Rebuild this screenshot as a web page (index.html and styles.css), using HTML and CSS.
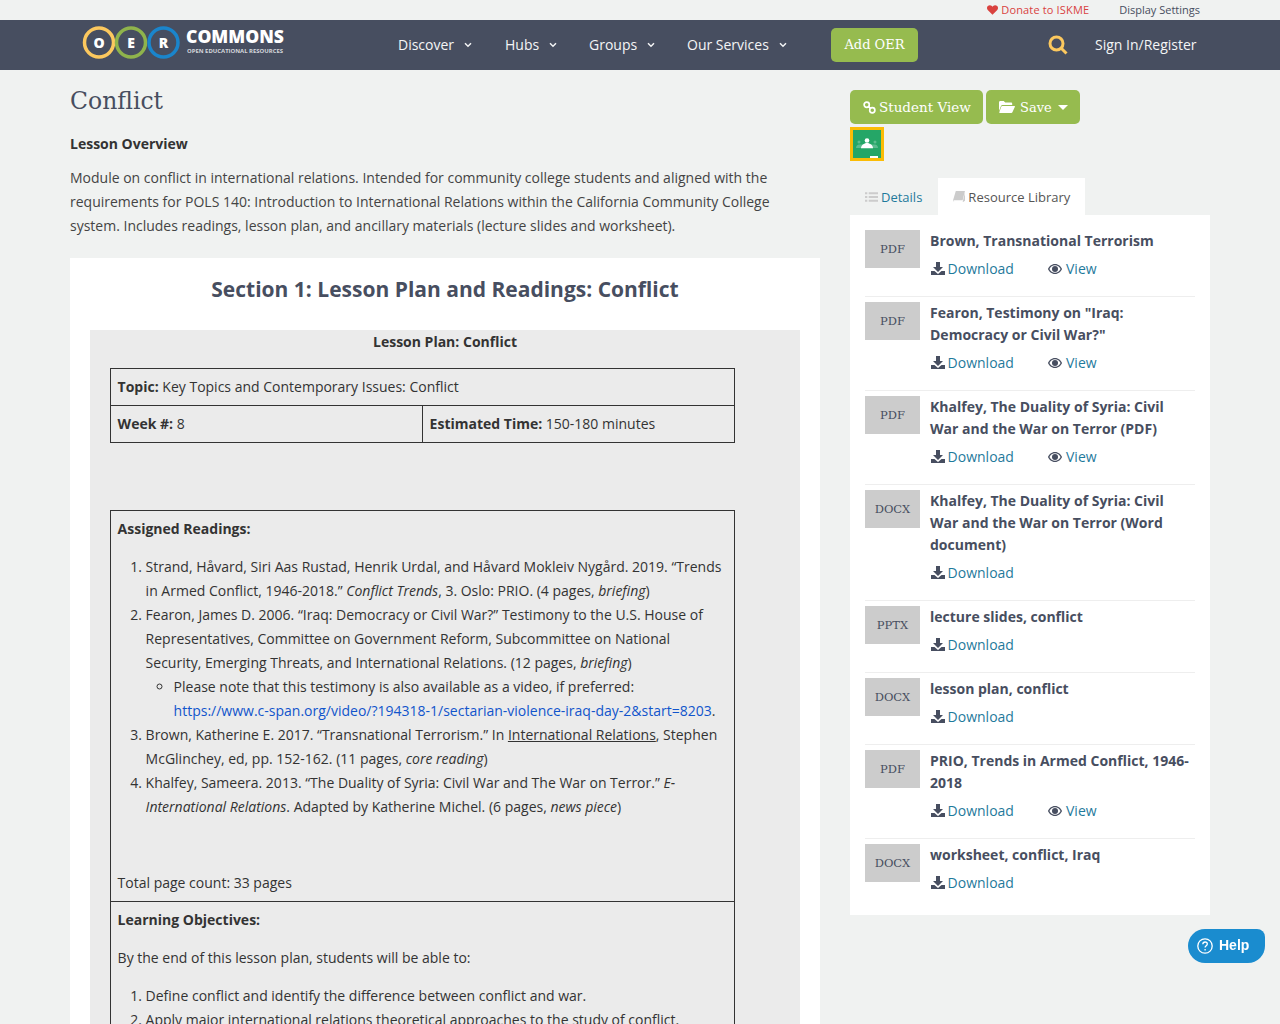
FILE: index.html
```html
<!DOCTYPE html>
<html lang="en">
<head>
<meta charset="utf-8">
<title>Conflict | OER Commons</title>
<link rel="stylesheet" href="styles.css">
</head>
<body>
<div class="topbar">
  <a class="donate"><svg class="heart" viewBox="0 0 16 14"><path d="M8 14 1.400 7.400C-.5 5.500-.4 2.700 1.200 1.200 2.900-.4 5.600-.3 7.100 1.300L8 2.200l.9-.9c1.500-1.600 4.200-1.700 5.900-.1 1.600 1.500 1.700 4.300-.2 6.200z"/></svg>Donate to ISKME</a>
  <a class="display">Display Settings</a>
</div>
<nav class="navbar">
  <svg class="logo" viewBox="0 0 210 36" width="210" height="36">
    <circle cx="19" cy="17.500" r="14.500" fill="#474e60" stroke="#fcc85e" stroke-width="3.500"/>
    <circle cx="51" cy="17.500" r="14.500" fill="#474e60" stroke="#8fb34c" stroke-width="3.500"/>
    <circle cx="83.500" cy="17.500" r="14.500" fill="#474e60" stroke="#1a85cc" stroke-width="3.500"/>
    <text class="logo-letter" x="19" y="22.500" text-anchor="middle">O</text>
    <text class="logo-letter" x="51" y="22.500" text-anchor="middle">E</text>
    <text class="logo-letter" x="83.500" y="22.500" text-anchor="middle">R</text>
    <text class="logo-name" x="106" y="18" textLength="98" lengthAdjust="spacingAndGlyphs">COMMONS</text>
    <text class="logo-sub" x="107" y="28" textLength="96" lengthAdjust="spacingAndGlyphs">OPEN EDUCATIONAL RESOURCES</text>
  </svg>
  <ul class="menu">
    <li class="menu-item discover">Discover<svg class="chev" viewBox="0 0 8 6"><path d="M1 1.200 4 4.200 7 1.200"/></svg></li>
    <li class="menu-item hubs">Hubs<svg class="chev" viewBox="0 0 8 6"><path d="M1 1.200 4 4.200 7 1.200"/></svg></li>
    <li class="menu-item groups">Groups<svg class="chev" viewBox="0 0 8 6"><path d="M1 1.200 4 4.200 7 1.200"/></svg></li>
    <li class="menu-item services">Our Services<svg class="chev" viewBox="0 0 8 6"><path d="M1 1.200 4 4.200 7 1.200"/></svg></li>
  </ul>
  <a class="add-oer">Add OER</a>
  <svg class="search" viewBox="0 0 20 20"><circle cx="8.500" cy="8.500" r="6.500"/><path d="M13.500 13.500 18.500 18.500"/></svg>
  <a class="signin">Sign In/Register</a>
</nav>
<div class="page">
  <main class="main">
    <h1 class="title">Conflict</h1>
    <p class="overview-label">Lesson Overview</p>
    <p class="overview">Module on conflict in international relations. Intended for community college students and aligned with the requirements for POLS 140: Introduction to International Relations within the California Community College system. Includes readings, lesson plan, and ancillary materials (lecture slides and worksheet).</p>
    <section class="card">
      <h2 class="section-title">Section 1: Lesson Plan and Readings: Conflict</h2>
      <div class="plan">
        <p class="plan-title">Lesson Plan: Conflict</p>
        <table class="grid-table">
          <tr><td colspan="2"><b>Topic:</b> Key Topics and Contemporary Issues: Conflict</td></tr>
          <tr><td class="half"><b>Week #:</b> 8</td><td><b>Estimated Time:</b> 150-180 minutes</td></tr>
        </table>
        <table class="grid-table second">
          <tr><td class="readings">
            <p class="cell-head"><b>Assigned Readings:</b></p>
            <ol class="list">
              <li>Strand, Håvard, Siri Aas Rustad, Henrik Urdal, and Håvard Mokleiv Nygård. 2019. “Trends in Armed Conflict, 1946-2018.” <i>Conflict Trends</i>, 3. Oslo: PRIO. (4 pages, <i>briefing</i>)</li>
              <li>Fearon, James D. 2006. “Iraq: Democracy or Civil War?” Testimony to the U.S. House of Representatives, Committee on Government Reform, Subcommittee on National Security, Emerging Threats, and International Relations. (12 pages, <i>briefing</i>)
                <ul class="sublist"><li>Please note that this testimony is also available as a video, if preferred: <a class="ext">https://www.c-span.org/video/?194318-1/sectarian-violence-iraq-day-2&amp;start=8203</a>.</li></ul>
              </li>
              <li>Brown, Katherine E. 2017. “Transnational Terrorism.” In <u>International Relations</u>, Stephen McGlinchey, ed, pp. 152-162. (11 pages, <i>core reading</i>)</li>
              <li>Khalfey, Sameera. 2013. “The Duality of Syria: Civil War and The War on Terror.” <i>E-International Relations</i>. Adapted by Katherine Michel. (6 pages, <i>news piece</i>)</li>
            </ol>
            <p class="total">Total page count: 33 pages</p>
          </td></tr>
          <tr><td class="objectives">
            <p class="cell-head"><b>Learning Objectives:</b></p>
            <p class="cell-head">By the end of this lesson plan, students will be able to:</p>
            <ol class="list">
              <li>Define conflict and identify the difference between conflict and war.</li>
              <li>Apply major international relations theoretical approaches to the study of conflict.</li>
            </ol>
          </td></tr>
        </table>
      </div>
    </section>
  </main>
  <aside class="side">
    <div class="actions">
      <a class="btn student"><svg class="btn-icon" viewBox="0 0 14 14"><circle cx="4" cy="4" r="2.800"/><circle cx="10" cy="10" r="2.800"/><path d="M5.800 5.800 8.200 8.200"/></svg>Student View</a>
      <a class="btn save"><svg class="folder" viewBox="0 0 16 12"><path d="M0 10V1.500C0 .7.500 0 1.300 0h3.400l1.500 1.500H12c.7 0 1.200.5 1.200 1.200V4H3.500C2.800 4 2.300 4.300 2 4.900z"/><path d="M3.200 5h12.300c.4 0 .6.400.4.800L13.400 11.300c-.2.400-.6.700-1 .7H.7c-.4 0-.6-.4-.4-.8L2.200 5.700C2.400 5.300 2.800 5 3.200 5z"/></svg><span class="save-text">Save</span><span class="caret"></span></a>
    </div>
    <svg class="classroom" viewBox="0 0 34 34" width="34" height="34">
      <rect x="1.500" y="1.500" width="31" height="31" fill="#25a667" stroke="#fbbc05" stroke-width="3"/>
      <circle cx="9" cy="15" r="1.500" fill="#5dbb8f"/><circle cx="25" cy="15" r="1.500" fill="#5dbb8f"/>
      <path d="M6 21c0-2 1.500-3.500 3-3.500h16c1.500 0 3 1.500 3 3.500z" fill="#5dbb8f"/>
      <circle cx="17" cy="13.500" r="2.300" fill="#fff"/>
      <path d="M11 21.300c0-3 3-5.300 6-5.300s6 2.300 6 5.300z" fill="#fff"/>
      <rect x="20" y="29" width="8" height="2" fill="#fff"/>
    </svg>
    <div class="tabs">
      <a class="tab details"><svg class="tab-icon" viewBox="0 0 14 12"><path d="M0 1h2.500v2H0zM4 1h10v2H4zM0 5h2.500v2H0zM4 5h10v2H4zM0 9h2.500v2H0zM4 9h10v2H4z"/></svg>Details</a>
      <a class="tab active"><svg class="tab-icon book" viewBox="0 0 13 12"><path d="M3 0h10L10.500 10H1.500C.6 10 .2 10.800.6 11.200.8 11.500 1.200 12 2 12h8.500L13 2v8.500L11 12H2C.8 12 0 11.200 0 10z"/></svg>Resource Library</a>
    </div>
    <div class="panel">
      <article class="res"><div class="thumb">PDF</div><div class="res-body"><h3 class="res-title">Brown, Transnational Terrorism</h3><div class="res-links"><a class="dl"><svg class="i-dl" viewBox="0 0 14 13"><path d="M5 0h4v5h3L7 10 2 5h3z"/><path d="M0 9h3.500L7 12l3.500-3H14v4H0z"/></svg>Download</a><a class="view"><svg class="i-eye" viewBox="0 0 14 10"><path d="M7 0C3.500 0 1 2.500 0 5c1 2.500 3.500 5 7 5s6-2.500 7-5c-1-2.500-3.500-5-7-5zm0 1.200c2.500 0 4.500 1.700 5.600 3.800C11.500 7.100 9.500 8.800 7 8.800S2.500 7.100 1.400 5C2.500 2.900 4.500 1.200 7 1.200z"/><circle cx="7" cy="5" r="3"/></svg>View</a></div></div></article>
      <article class="res"><div class="thumb">PDF</div><div class="res-body"><h3 class="res-title">Fearon, Testimony on "Iraq: Democracy or Civil War?"</h3><div class="res-links"><a class="dl"><svg class="i-dl" viewBox="0 0 14 13"><path d="M5 0h4v5h3L7 10 2 5h3z"/><path d="M0 9h3.500L7 12l3.500-3H14v4H0z"/></svg>Download</a><a class="view"><svg class="i-eye" viewBox="0 0 14 10"><path d="M7 0C3.500 0 1 2.500 0 5c1 2.500 3.500 5 7 5s6-2.500 7-5c-1-2.500-3.500-5-7-5zm0 1.200c2.500 0 4.500 1.700 5.600 3.800C11.500 7.100 9.500 8.800 7 8.800S2.500 7.100 1.400 5C2.500 2.900 4.500 1.200 7 1.200z"/><circle cx="7" cy="5" r="3"/></svg>View</a></div></div></article>
      <article class="res"><div class="thumb">PDF</div><div class="res-body"><h3 class="res-title">Khalfey, The Duality of Syria: Civil War and the War on Terror (PDF)</h3><div class="res-links"><a class="dl"><svg class="i-dl" viewBox="0 0 14 13"><path d="M5 0h4v5h3L7 10 2 5h3z"/><path d="M0 9h3.500L7 12l3.500-3H14v4H0z"/></svg>Download</a><a class="view"><svg class="i-eye" viewBox="0 0 14 10"><path d="M7 0C3.500 0 1 2.500 0 5c1 2.500 3.500 5 7 5s6-2.500 7-5c-1-2.500-3.500-5-7-5zm0 1.200c2.500 0 4.500 1.700 5.600 3.800C11.500 7.100 9.500 8.800 7 8.800S2.500 7.100 1.400 5C2.500 2.900 4.500 1.200 7 1.200z"/><circle cx="7" cy="5" r="3"/></svg>View</a></div></div></article>
      <article class="res"><div class="thumb">DOCX</div><div class="res-body"><h3 class="res-title">Khalfey, The Duality of Syria: Civil War and the War on Terror (Word document)</h3><div class="res-links"><a class="dl"><svg class="i-dl" viewBox="0 0 14 13"><path d="M5 0h4v5h3L7 10 2 5h3z"/><path d="M0 9h3.500L7 12l3.500-3H14v4H0z"/></svg>Download</a></div></div></article>
      <article class="res"><div class="thumb">PPTX</div><div class="res-body"><h3 class="res-title">lecture slides, conflict</h3><div class="res-links"><a class="dl"><svg class="i-dl" viewBox="0 0 14 13"><path d="M5 0h4v5h3L7 10 2 5h3z"/><path d="M0 9h3.500L7 12l3.500-3H14v4H0z"/></svg>Download</a></div></div></article>
      <article class="res"><div class="thumb">DOCX</div><div class="res-body"><h3 class="res-title">lesson plan, conflict</h3><div class="res-links"><a class="dl"><svg class="i-dl" viewBox="0 0 14 13"><path d="M5 0h4v5h3L7 10 2 5h3z"/><path d="M0 9h3.500L7 12l3.500-3H14v4H0z"/></svg>Download</a></div></div></article>
      <article class="res"><div class="thumb">PDF</div><div class="res-body"><h3 class="res-title">PRIO, Trends in Armed Conflict, 1946-2018</h3><div class="res-links"><a class="dl"><svg class="i-dl" viewBox="0 0 14 13"><path d="M5 0h4v5h3L7 10 2 5h3z"/><path d="M0 9h3.500L7 12l3.500-3H14v4H0z"/></svg>Download</a><a class="view"><svg class="i-eye" viewBox="0 0 14 10"><path d="M7 0C3.500 0 1 2.500 0 5c1 2.500 3.500 5 7 5s6-2.500 7-5c-1-2.500-3.500-5-7-5zm0 1.200c2.500 0 4.500 1.700 5.600 3.800C11.500 7.100 9.500 8.800 7 8.800S2.500 7.100 1.400 5C2.500 2.900 4.500 1.200 7 1.200z"/><circle cx="7" cy="5" r="3"/></svg>View</a></div></div></article>
      <article class="res"><div class="thumb">DOCX</div><div class="res-body"><h3 class="res-title">worksheet, conflict, Iraq</h3><div class="res-links"><a class="dl"><svg class="i-dl" viewBox="0 0 14 13"><path d="M5 0h4v5h3L7 10 2 5h3z"/><path d="M0 9h3.500L7 12l3.500-3H14v4H0z"/></svg>Download</a></div></div></article>
    </div>
  </aside>
</div>
<a class="help"><svg class="help-icon" viewBox="0 0 16 16"><circle cx="8" cy="8" r="7.200"/><path d="M5.800 6.200C5.900 4.800 6.900 4 8.100 4c1.300 0 2.200.8 2.200 2 0 1.700-2.200 1.700-2.200 3.400"/><path d="M8.100 11v1.400"/></svg><span class="help-text">Help</span></a>
</body>
</html>
```

FILE: styles.css
```css
* { box-sizing: border-box; }
html, body { height: 1024px; overflow: hidden; }
body { margin: 0; background: #f0f2f1; color: #444; font: 14px/24px "Open Sans", sans-serif; }
p, h1, h2, h3, ul, ol { margin: 0; padding: 0; }

.topbar { height: 20px; display: flex; justify-content: flex-end; align-items: center; padding-right: 80px; font-size: 11px; line-height: 20px; }
.donate { display: flex; align-items: center; color: #d9423f; margin-right: 30px; letter-spacing: .15px; }
.heart { width: 11px; height: 10px; margin-right: 3px; fill: #d9423f; }
.display { color: #474e60; }

.navbar { height: 50px; background: #474e60; display: flex; align-items: center; color: #f4f5f6; padding-left: 80px; }
.logo { flex: none; margin-top: -4px; }
.logo-letter { font: 800 14px "Open Sans", sans-serif; fill: #fff; }
.logo-name { font: 800 17px "Open Sans", sans-serif; fill: #fff; }
.logo-sub { font: 700 6px "Open Sans", sans-serif; fill: #d5d7dc; }
.menu { list-style: none; display: flex; margin-left: 108px; }
.menu-item { display: flex; align-items: center; }
.discover { width: 107px; }
.hubs { width: 84px; }
.groups { width: 98px; }
.services { width: 144px; }
.chev { width: 8px; height: 6px; margin-left: 10px; fill: none; stroke: #f4f5f6; stroke-width: 1.500; }
.add-oer { width: 87px; height: 34px; border-radius: 5px; background: #96bb4f; color: #fff; font: 13px/34px "DejaVu Serif", serif; text-align: center; }
.search { width: 20px; height: 20px; margin-left: 130px; fill: none; stroke: #fcc85e; stroke-width: 3; }
.signin { margin-left: 27px; }

.page { display: grid; grid-template-columns: 750px 360px; column-gap: 30px; padding-left: 70px; }
.title { font: 400 23.500px/30px "DejaVu Serif", serif; color: #474e60; margin-top: 16px; }
.overview-label { font-weight: 700; color: #333; margin-top: 16px; }
.overview { margin-top: 10px; }
.card { margin-top: 20px; background: #fff; padding: 15px 20px 0; }
.section-title { font-size: 21px; line-height: 32px; font-weight: 700; color: #474e60; text-align: center; }
.plan { margin-top: 25px; background: #ebebeb; padding: 0 20px; color: #333; }
.plan-title { font-weight: 700; text-align: center; line-height: 24px; }
.grid-table { width: 625px; border-collapse: collapse; margin-top: 14px; table-layout: fixed; }
.grid-table td { border: 1px solid #333; padding: 6px 7px 6px 6.600px; vertical-align: top; }
.grid-table .half { width: 312px; }
.second { margin-top: 67px; }
.cell-head { margin-bottom: 14px; }
.list { padding-left: 28px; }
.sublist { padding-left: 28px; list-style: circle; }
.ext { color: #1155cc; }
.total { margin-top: 52px; }

.actions { display: flex; gap: 3px; margin-top: 20px; }
.btn { display: flex; align-items: center; height: 34px; border-radius: 5px; background: #96bb4f; color: #fff; font: 13.500px/34px "DejaVu Serif", serif; }
.student { width: 133px; padding-left: 13px; }
.save { width: 94px; padding-left: 13px; font-size: 13px; }
.save-text { margin-top: 1px; }
.btn-icon { width: 13px; height: 13px; margin-right: 3px; fill: none; stroke: #fff; stroke-width: 1.800; }
.folder { width: 16px; height: 12px; margin-right: 5px; fill: #fff; }
.caret { width: 0; height: 0; margin-left: 6px; border: 5px solid transparent; border-top-color: #fff; border-bottom: 0; }
.classroom { display: block; margin-top: 3px; }
.tabs { display: flex; margin-top: 17px; height: 37px; font-size: 13px; }
.tab { display: flex; align-items: center; padding: 0 15px; color: #1f7a9c; }
.tab.details { padding-right: 16px; }
.tab.active { background: #fff; color: #555; }
.tab-icon { width: 13px; height: 12px; margin-right: 3px; fill: #ccc; }
.book { width: 12px; height: 11px; }
.panel { background: #fff; padding: 15px 15px 5px; }
.res { display: flex; border-bottom: 1px solid #eee; padding-bottom: 16px; margin-bottom: 5px; }
.res:last-child { border-bottom: 0; margin-bottom: 0; }
.thumb { flex: none; width: 55px; height: 38px; background: #ccc; color: #474e60; font: 11.500px/39px "DejaVu Serif", serif; text-align: center; margin-right: 10px; }
.res-body { flex: 1; }
.res-title { font-size: 14px; line-height: 22px; font-weight: 700; color: #474e60; }
.res-links { display: flex; margin-top: 6px; line-height: 22px; color: #1f7a9c; }
.dl { display: flex; align-items: center; width: 118px; }
.view { display: flex; align-items: center; }
.i-dl { width: 14px; height: 13px; margin: -2px 2.600px 0 1px; fill: #474e60; }
.i-eye { width: 14px; height: 10px; margin-right: 4px; fill: #474e60; }

.help { position: fixed; left: 1188px; top: 929px; width: 77px; height: 34px; background: #1a8ccf; color: #fff; border-radius: 17px 8px 17px 17px; font: 700 14px/34px "Liberation Sans", sans-serif; display: flex; align-items: center; padding-left: 9px; }
.help-icon { width: 16px; height: 16px; margin-right: 6px; fill: none; stroke: #fff; stroke-width: 1.300; }
.help-text { margin-top: -2px; }
```
